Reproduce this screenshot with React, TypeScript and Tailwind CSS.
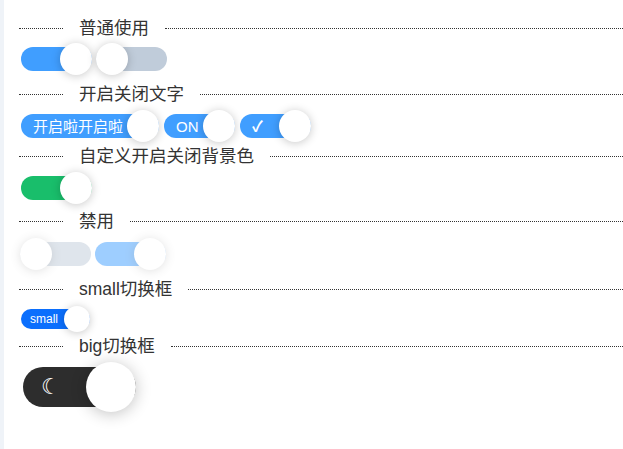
import React from "react";

const FONT = { fontFamily: '"Liberation Sans", "Noto Sans CJK SC", sans-serif' };

function Divider({ text, className = "" }: { text: string; className?: string }) {
  return (
    <div className={"flex items-center h-5 pl-[15px] " + className}>
      <div className="w-[44px] border-t border-dotted border-[#333]" />
      <span className="px-4 text-[17.5px] leading-5 text-[#333] whitespace-nowrap">{text}</span>
      <div className="flex-1 border-t border-dotted border-[#333]" />
    </div>
  );
}

type SwitchProps = {
  on: boolean;
  bg: string;
  text?: React.ReactNode;
  disabled?: boolean;
};

function Switch({ on, bg, text, disabled }: SwitchProps) {
  return (
    <div className={"relative flex items-center h-8 " + (disabled ? "opacity-50" : "")}>
      <div
        className="flex items-center h-6 min-w-[71px] rounded-full pl-3 pr-9 text-white text-[15px] leading-none"
        style={{ backgroundColor: bg }}
      >
        {text}
      </div>
      <div
        className={
          "absolute top-0 w-8 h-8 rounded-full bg-white shadow-[0_1px_10px_rgba(0,0,0,0.22)] " +
          (on ? "right-0" : "left-0")
        }
      />
    </div>
  );
}

export default function App() {
  return (
    <div className="flex min-h-screen bg-white" style={FONT}>
      <div className="w-[4px] shrink-0 bg-[#eff3f8]" />
      <div className="flex-1 flex flex-col pt-[18px]">
        <Divider text="普通使用" />
        <div className="flex items-center gap-1 pl-[17px] mt-[5px]">
          <Switch on bg="#409eff" />
          <Switch on={false} bg="#c0ccda" />
        </div>

        <Divider text="开启关闭文字" className="mt-[9px]" />
        <div className="flex items-center gap-[5px] pl-[17px] mt-[6px]">
          <Switch on bg="#409eff" text="开启啦开启啦" />
          <Switch on bg="#409eff" text="ON" />
          <Switch on bg="#409eff" text={<span className="font-bold">✓</span>} />
        </div>

        <Divider text="自定义开启关闭背景色" className="mt-[4px]" />
        <div className="flex items-center gap-1 pl-[17px] mt-[6px]">
          <Switch on bg="#19be6b" />
        </div>

        <Divider text="禁用" className="mt-[7px]" />
        <div className="flex items-center gap-1 pl-[16px] mt-[7px]">
          <Switch on={false} bg="#c0ccda" disabled />
          <Switch on bg="#409eff" disabled />
        </div>

        <Divider text="small切换框" className="mt-[9px]" />
        <div className="flex items-center pl-[17px] mt-[7px]">
          <div className="relative flex items-center h-[26px]">
            <div className="flex items-center h-5 min-w-[66px] rounded-full pl-[9px] pr-8 bg-[#0b6ffd] text-white text-[12px] leading-none">
              small
            </div>
            <div className="absolute top-0 right-0 w-[26px] h-[26px] rounded-full bg-white shadow-[0_1px_9px_rgba(0,0,0,0.22)]" />
          </div>
        </div>

        <Divider text="big切换框" className="mt-[4px]" />
        <div className="flex items-center pl-[19px] mt-[6px]">
          <div className="relative flex items-center h-[50px]">
            <div className="flex items-center h-10 w-[113px] rounded-full pl-[18px] bg-[#2d2d2d] text-white text-[22px] leading-none">
              ☾
            </div>
            <div className="absolute top-0 right-0 w-[50px] h-[50px] rounded-full bg-white shadow-[0_2px_16px_rgba(0,0,0,0.24)]" />
          </div>
        </div>
      </div>
    </div>
  );
}
